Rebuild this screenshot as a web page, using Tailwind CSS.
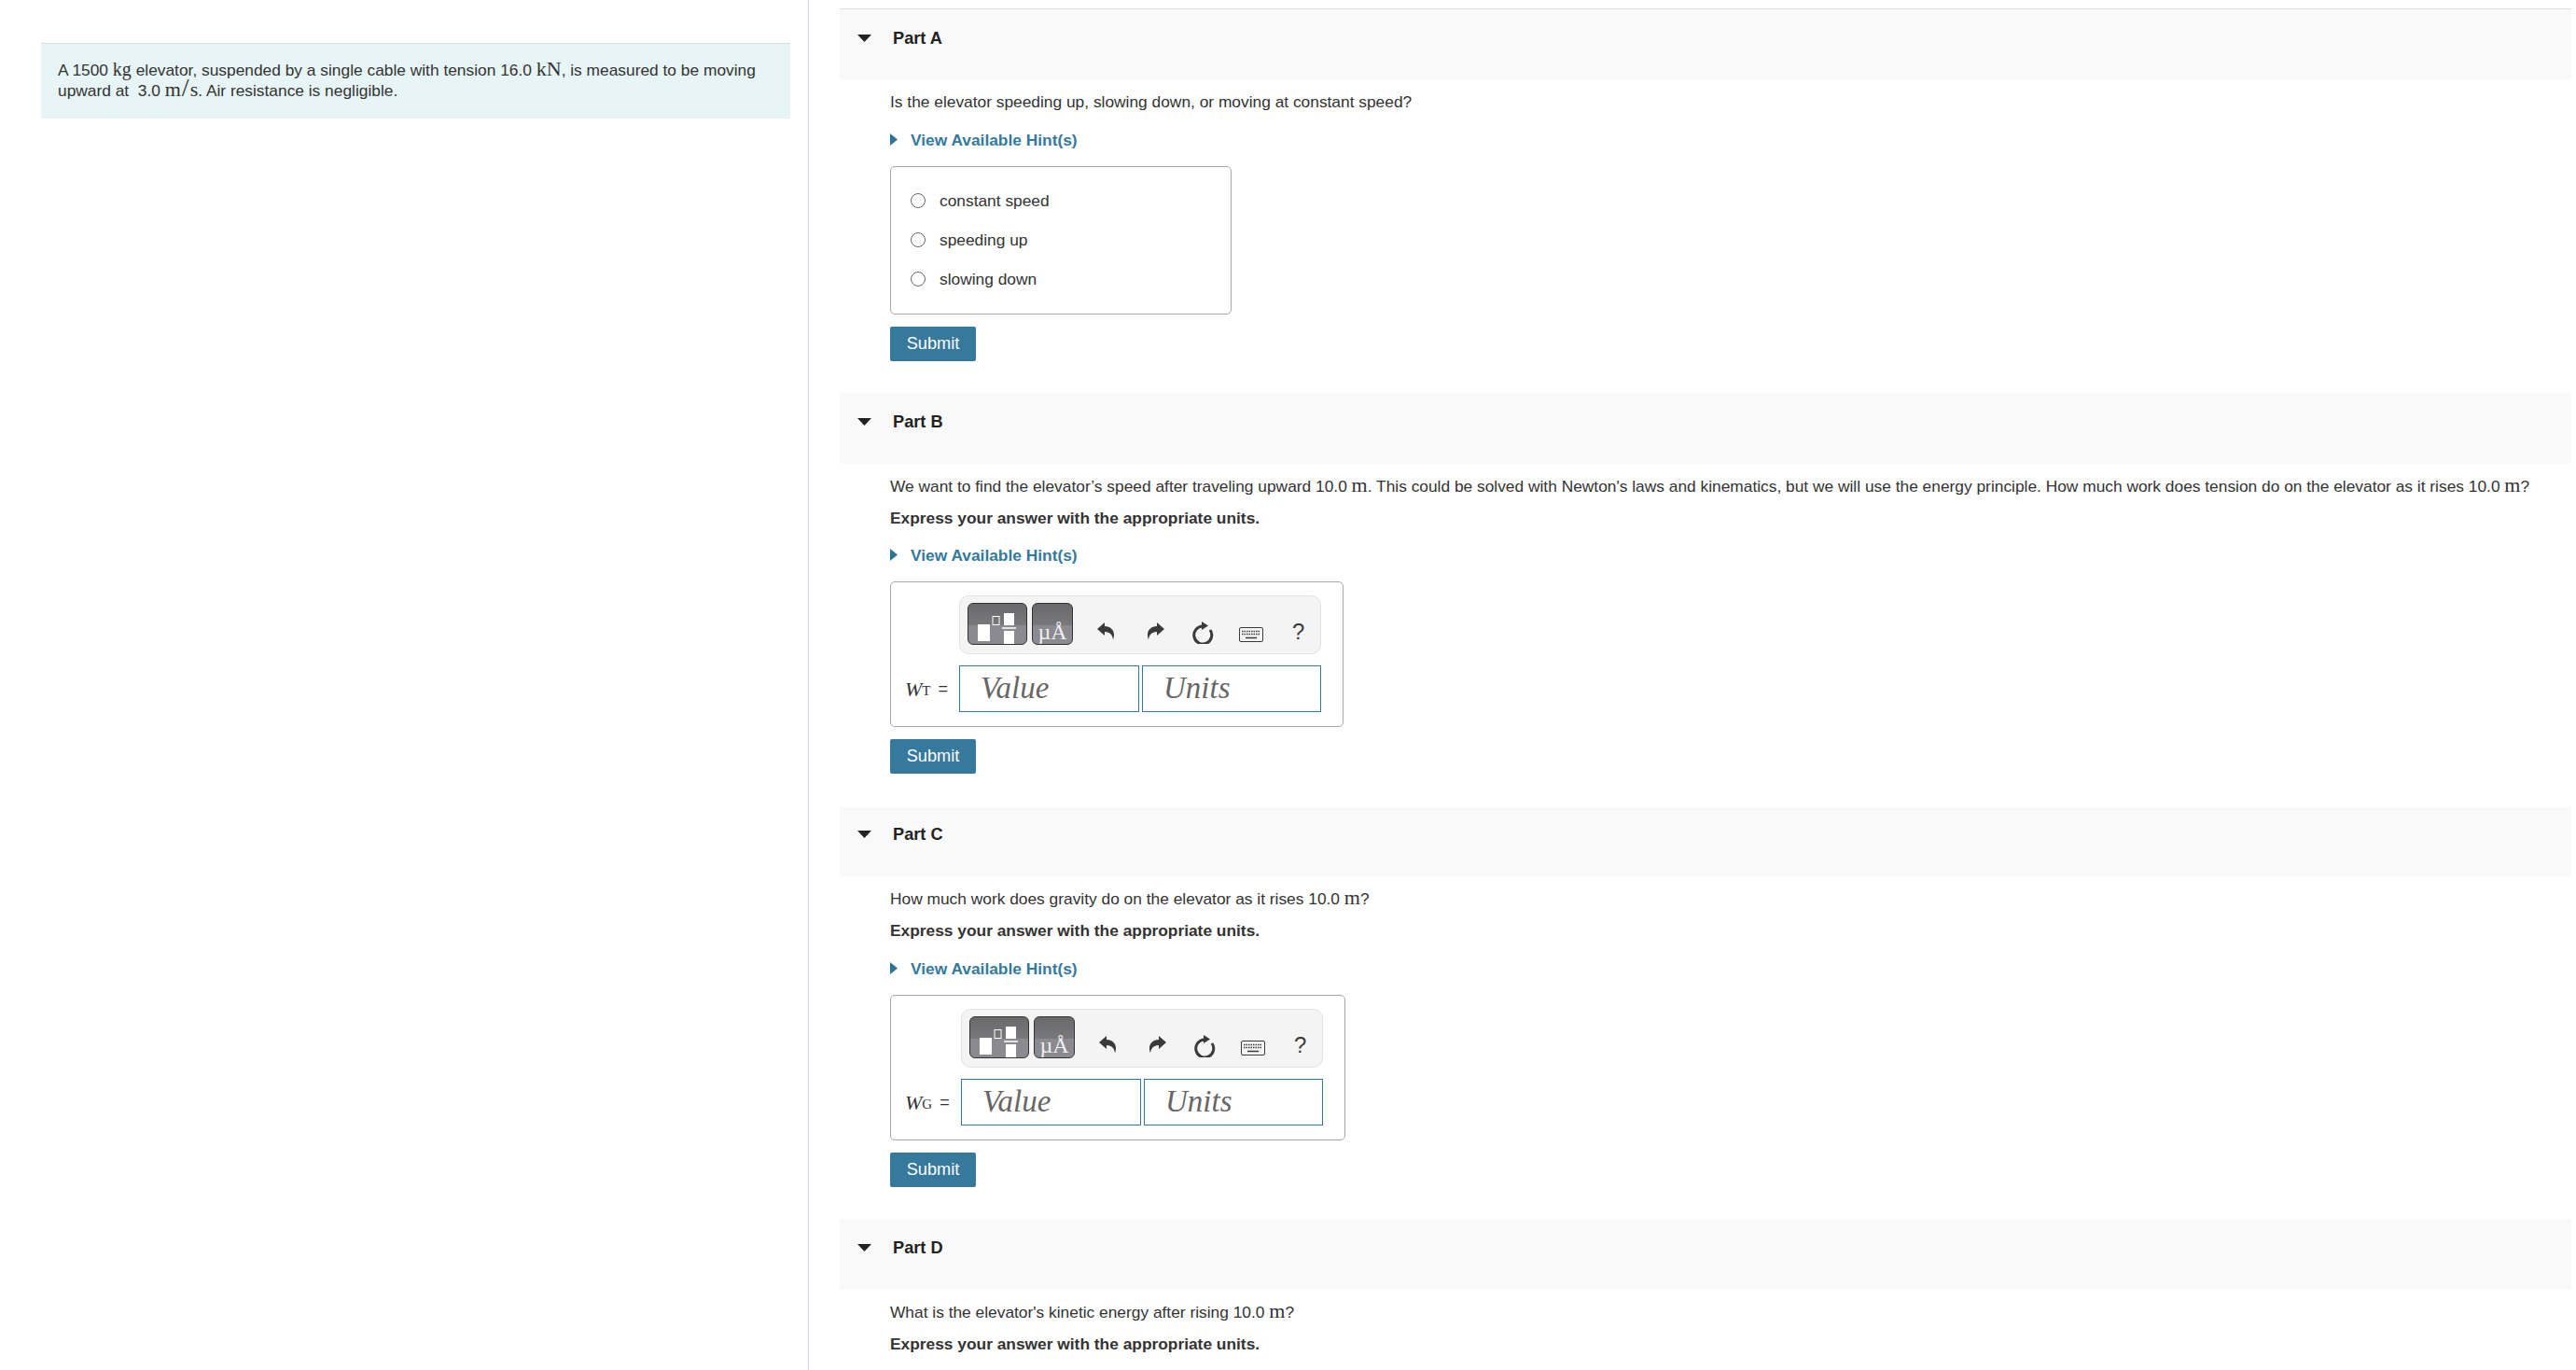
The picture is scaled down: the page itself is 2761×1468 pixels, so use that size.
<!DOCTYPE html>
<html lang="en">
<head>
  <meta charset="UTF-8">
  <meta name="viewport" content="width=device-width, initial-scale=1.0">
  <title>Part A</title>
  <script src="https://cdn.jsdelivr.net/npm/@tailwindcss/browser@4"></script>
</head>
<body class="bg-white text-[#333] text-[17.35px] font-['Liberation_Sans',sans-serif]">
<div class="flex h-[1468px] overflow-hidden">

  <!-- problem statement -->
  <aside class="w-[867px] shrink-0 border-r border-[#cdd6e6] pt-[46px] pl-[44px] pr-[19px]">
    <div class="bg-[#e8f5f6] border-t border-[#dddddd] h-[81px] pl-[18px] pt-[17px] leading-[22px]">
      <p>A 1500 <span class="font-['Liberation_Serif',serif] text-[20px] leading-[0]">kg</span> elevator, suspended by a single cable with tension 16.0 <span class="font-['Liberation_Serif',serif] text-[22px] leading-[0]">kN</span>, is measured to be moving<br>upward at &nbsp;3.0 <span class="font-['Liberation_Serif',serif] text-[22px] leading-[0]">m<span class="text-[28px] leading-[0] font-light mx-[1px]">/</span>s</span>. Air resistance is negligible.</p>
    </div>
  </aside>

  <main class="flex-1 pl-[33px] pr-[5px] pt-[9px]">

    <!-- Part A -->
    <section class="mb-[34px]">
      <div class="h-[76px] bg-[#f9f9f9] border-t border-[#dddddd] flex items-start pt-[20px] pl-[19px]">
        <svg width="15" height="8" viewBox="0 0 15 8" class="mt-[7px]"><path d="M0 0H15L7.5 8Z" fill="#222"/></svg>
        <h2 class="ml-[23px] text-[18.2px] leading-[22px] font-bold text-[#222]">Part A</h2>
      </div>
      <div class="pl-[54px]">
        <p class="mt-[12px] leading-[24px]">Is the elevator speeding up, slowing down, or moving at constant speed?</p>
        <a class="mt-[17px] flex items-center h-[24px] font-bold text-[#337a9c]">
          <svg width="8" height="13" viewBox="0 0 8 13" class="mr-[14px] -mt-[1px]"><path d="M0 0L8 6.5L0 13Z" fill="#2f7396"/></svg>View Available Hint(s)
        </a>
        <div class="mt-[16px] w-[366px] h-[159px] border border-[#a8a8a8] rounded-[5px] pt-[15px] pl-[21px]">
          <label class="flex items-center h-[42px]"><input type="radio" name="a" class="appearance-none w-4 h-4 rounded-full border border-[#666] bg-white mr-[15px] -mt-[1px]">constant speed</label>
          <label class="flex items-center h-[42px]"><input type="radio" name="a" class="appearance-none w-4 h-4 rounded-full border border-[#666] bg-white mr-[15px] -mt-[1px]">speeding up</label>
          <label class="flex items-center h-[42px]"><input type="radio" name="a" class="appearance-none w-4 h-4 rounded-full border border-[#666] bg-white mr-[15px] -mt-[1px]">slowing down</label>
        </div>
        <button class="block mt-[13px] w-[92px] h-[37px] rounded-[2px] bg-[#37799c] text-white text-[18.2px]">Submit</button>
      </div>
    </section>

    <!-- Part B -->
    <section class="mb-[36px]">
      <div class="h-[76px] bg-[#f9f9f9] flex items-start pt-[20px] pl-[19px]">
        <svg width="15" height="8" viewBox="0 0 15 8" class="mt-[7px]"><path d="M0 0H15L7.5 8Z" fill="#222"/></svg>
        <h2 class="ml-[23px] text-[18.2px] leading-[22px] font-bold text-[#222]">Part B</h2>
      </div>
      <div class="pl-[54px]">
        <p class="mt-[12px] leading-[24px] whitespace-nowrap">We want to find the elevator’s speed after traveling upward 10.0 <span class="font-['Liberation_Serif',serif] text-[22px] leading-[0]">m</span>. This could be solved with Newton's laws and kinematics, but we will use the energy principle. How much work does tension do on the elevator as it rises 10.0 <span class="font-['Liberation_Serif',serif] text-[22px] leading-[0]">m</span>?</p>
        <p class="mt-[10px] leading-[24px] font-bold">Express your answer with the appropriate units.</p>
        <a class="mt-[16px] flex items-center h-[24px] font-bold text-[#337a9c]">
          <svg width="8" height="13" viewBox="0 0 8 13" class="mr-[14px] -mt-[1px]"><path d="M0 0L8 6.5L0 13Z" fill="#2f7396"/></svg>View Available Hint(s)
        </a>
        <div class="mt-[16px] w-fit grid grid-cols-[46px_auto] gap-x-[12px] gap-y-[12px] border border-[#a8a8a8] rounded-[5px] pt-[14px] pb-[15px] pl-[15px] pr-[23px]">
          <div class="col-start-2 w-[388px] h-[63px] bg-[#f4f4f4] border border-[#e3e3e3] rounded-[10px] flex items-center pl-[8px] text-[#3a3a3a]">
            <div class="mb-[2px] w-[64px] h-[45px] rounded-[6px] border border-[#333] bg-[linear-gradient(#69696b,#79797b_53%,#8b8a90_53%,#8b8a90)]">
              <svg width="62" height="43" viewBox="0 0 62 43"><path d="M10 22H23V40H10ZM38 10H49V23H38ZM38 29H49V43H38Z" fill="#fff"/><path d="M36 26H51" stroke="#fff" stroke-width="1.5"/><rect x="26" y="13.5" width="7" height="9" fill="none" stroke="#fff" stroke-width="1"/></svg>
            </div>
            <div class="mb-[2px] ml-[5px] w-[44px] h-[45px] rounded-[6px] border border-[#333] bg-[linear-gradient(#69696b,#79797b_53%,#8b8a90_53%,#8b8a90)] font-['Liberation_Serif',serif] text-[24px] leading-[24px] text-[#f0f0f0] text-center pt-[18px]">µÅ</div>
            <svg width="18" height="20" viewBox="0 0 18 20" class="ml-[26px] mt-[13px]"><path d="M0 8L8 1V5C14 5 18 9 18 14C18 16 17.5 18 17 19.5C16.5 15 14 11 8 11V15Z" fill="#3a3a3a"/></svg>
            <svg width="18" height="20" viewBox="0 0 18 20" class="ml-[36px] mt-[13px]"><path d="M18 8L10 1V5C4 5 0 9 0 14C0 16 .5 18 1 19.5C1.5 15 4 11 10 11V15Z" fill="#3a3a3a"/></svg>
            <svg width="24" height="25" viewBox="0 0 24 25" class="ml-[29px] mt-[15px]"><path d="M12 6A9.5 9.5 0 1 0 20 10" fill="none" stroke="#3a3a3a" stroke-width="3"/><path d="M11 1L18 5.5L11 10Z" fill="#3a3a3a"/></svg>
            <svg width="26" height="16" viewBox="0 0 26 16" class="ml-[27px] mt-[21px]"><rect x=".5" y=".5" width="25" height="15" rx="1.5" fill="#f4f4f4" stroke="#3a3a3a"/><path d="M3 4.5H23M3 7.5H23" stroke="#3a3a3a" stroke-width="1.5" stroke-dasharray="1.5 1"/><path d="M7 11.5H19" stroke="#3a3a3a" stroke-width="1.5"/></svg>
            <span class="ml-[31px] text-[24px] leading-[24px] mt-[15px]">?</span>
          </div>
          <div class="col-start-1 flex items-center whitespace-nowrap font-['Liberation_Serif',serif]">
            <i class="text-[22px]">W</i><span class="text-[15px] mt-[4px]">T</span><span class="ml-[8px] font-['Liberation_Sans',sans-serif] text-[18px]">=</span>
          </div>
          <div class="flex gap-[3px] font-['Liberation_Serif',serif] italic text-[33px] text-[#666]">
            <div class="w-[193px] h-[50px] border border-[#37799c] pl-[22px] leading-[46px]">Value</div>
            <div class="w-[192px] h-[50px] border border-[#37799c] pl-[22px] leading-[46px]">Units</div>
          </div>
        </div>
        <button class="block mt-[13px] w-[92px] h-[37px] rounded-[2px] bg-[#37799c] text-white text-[18.2px]">Submit</button>
      </div>
    </section>

    <!-- Part C -->
    <section class="mb-[34px]">
      <div class="h-[74px] bg-[#f9f9f9] flex items-start pt-[18px] pl-[19px]">
        <svg width="15" height="8" viewBox="0 0 15 8" class="mt-[7px]"><path d="M0 0H15L7.5 8Z" fill="#222"/></svg>
        <h2 class="ml-[23px] text-[18.2px] leading-[22px] font-bold text-[#222]">Part C</h2>
      </div>
      <div class="pl-[54px]">
        <p class="mt-[12px] leading-[24px]">How much work does gravity do on the elevator as it rises 10.0 <span class="font-['Liberation_Serif',serif] text-[22px] leading-[0]">m</span>?</p>
        <p class="mt-[10px] leading-[24px] font-bold">Express your answer with the appropriate units.</p>
        <a class="mt-[17px] flex items-center h-[24px] font-bold text-[#337a9c]">
          <svg width="8" height="13" viewBox="0 0 8 13" class="mr-[14px] -mt-[1px]"><path d="M0 0L8 6.5L0 13Z" fill="#2f7396"/></svg>View Available Hint(s)
        </a>
        <div class="mt-[16px] w-fit grid grid-cols-[48px_auto] gap-x-[12px] gap-y-[12px] border border-[#a8a8a8] rounded-[5px] pt-[14px] pb-[15px] pl-[15px] pr-[23px]">
          <div class="col-start-2 w-[388px] h-[63px] bg-[#f4f4f4] border border-[#e3e3e3] rounded-[10px] flex items-center pl-[8px] text-[#3a3a3a]">
            <div class="mb-[2px] w-[64px] h-[45px] rounded-[6px] border border-[#333] bg-[linear-gradient(#69696b,#79797b_53%,#8b8a90_53%,#8b8a90)]">
              <svg width="62" height="43" viewBox="0 0 62 43"><path d="M10 22H23V40H10ZM38 10H49V23H38ZM38 29H49V43H38Z" fill="#fff"/><path d="M36 26H51" stroke="#fff" stroke-width="1.5"/><rect x="26" y="13.5" width="7" height="9" fill="none" stroke="#fff" stroke-width="1"/></svg>
            </div>
            <div class="mb-[2px] ml-[5px] w-[44px] h-[45px] rounded-[6px] border border-[#333] bg-[linear-gradient(#69696b,#79797b_53%,#8b8a90_53%,#8b8a90)] font-['Liberation_Serif',serif] text-[24px] leading-[24px] text-[#f0f0f0] text-center pt-[18px]">µÅ</div>
            <svg width="18" height="20" viewBox="0 0 18 20" class="ml-[26px] mt-[13px]"><path d="M0 8L8 1V5C14 5 18 9 18 14C18 16 17.5 18 17 19.5C16.5 15 14 11 8 11V15Z" fill="#3a3a3a"/></svg>
            <svg width="18" height="20" viewBox="0 0 18 20" class="ml-[36px] mt-[13px]"><path d="M18 8L10 1V5C4 5 0 9 0 14C0 16 .5 18 1 19.5C1.5 15 4 11 10 11V15Z" fill="#3a3a3a"/></svg>
            <svg width="24" height="25" viewBox="0 0 24 25" class="ml-[29px] mt-[15px]"><path d="M12 6A9.5 9.5 0 1 0 20 10" fill="none" stroke="#3a3a3a" stroke-width="3"/><path d="M11 1L18 5.5L11 10Z" fill="#3a3a3a"/></svg>
            <svg width="26" height="16" viewBox="0 0 26 16" class="ml-[27px] mt-[21px]"><rect x=".5" y=".5" width="25" height="15" rx="1.5" fill="#f4f4f4" stroke="#3a3a3a"/><path d="M3 4.5H23M3 7.5H23" stroke="#3a3a3a" stroke-width="1.5" stroke-dasharray="1.5 1"/><path d="M7 11.5H19" stroke="#3a3a3a" stroke-width="1.5"/></svg>
            <span class="ml-[31px] text-[24px] leading-[24px] mt-[15px]">?</span>
          </div>
          <div class="col-start-1 flex items-center whitespace-nowrap font-['Liberation_Serif',serif]">
            <i class="text-[22px]">W</i><span class="text-[15px] mt-[4px]">G</span><span class="ml-[8px] font-['Liberation_Sans',sans-serif] text-[18px]">=</span>
          </div>
          <div class="flex gap-[3px] font-['Liberation_Serif',serif] italic text-[33px] text-[#666]">
            <div class="w-[193px] h-[50px] border border-[#37799c] pl-[22px] leading-[46px]">Value</div>
            <div class="w-[192px] h-[50px] border border-[#37799c] pl-[22px] leading-[46px]">Units</div>
          </div>
        </div>
        <button class="block mt-[13px] w-[92px] h-[37px] rounded-[2px] bg-[#37799c] text-white text-[18.2px]">Submit</button>
      </div>
    </section>

    <!-- Part D -->
    <section>
      <div class="h-[76px] bg-[#f9f9f9] flex items-start pt-[20px] pl-[19px]">
        <svg width="15" height="8" viewBox="0 0 15 8" class="mt-[7px]"><path d="M0 0H15L7.5 8Z" fill="#222"/></svg>
        <h2 class="ml-[23px] text-[18.2px] leading-[22px] font-bold text-[#222]">Part D</h2>
      </div>
      <div class="pl-[54px]">
        <p class="mt-[12px] leading-[24px]">What is the elevator's kinetic energy after rising 10.0 <span class="font-['Liberation_Serif',serif] text-[22px] leading-[0]">m</span>?</p>
        <p class="mt-[10px] leading-[24px] font-bold">Express your answer with the appropriate units.</p>
      </div>
    </section>

  </main>
</div>
</body>
</html>
